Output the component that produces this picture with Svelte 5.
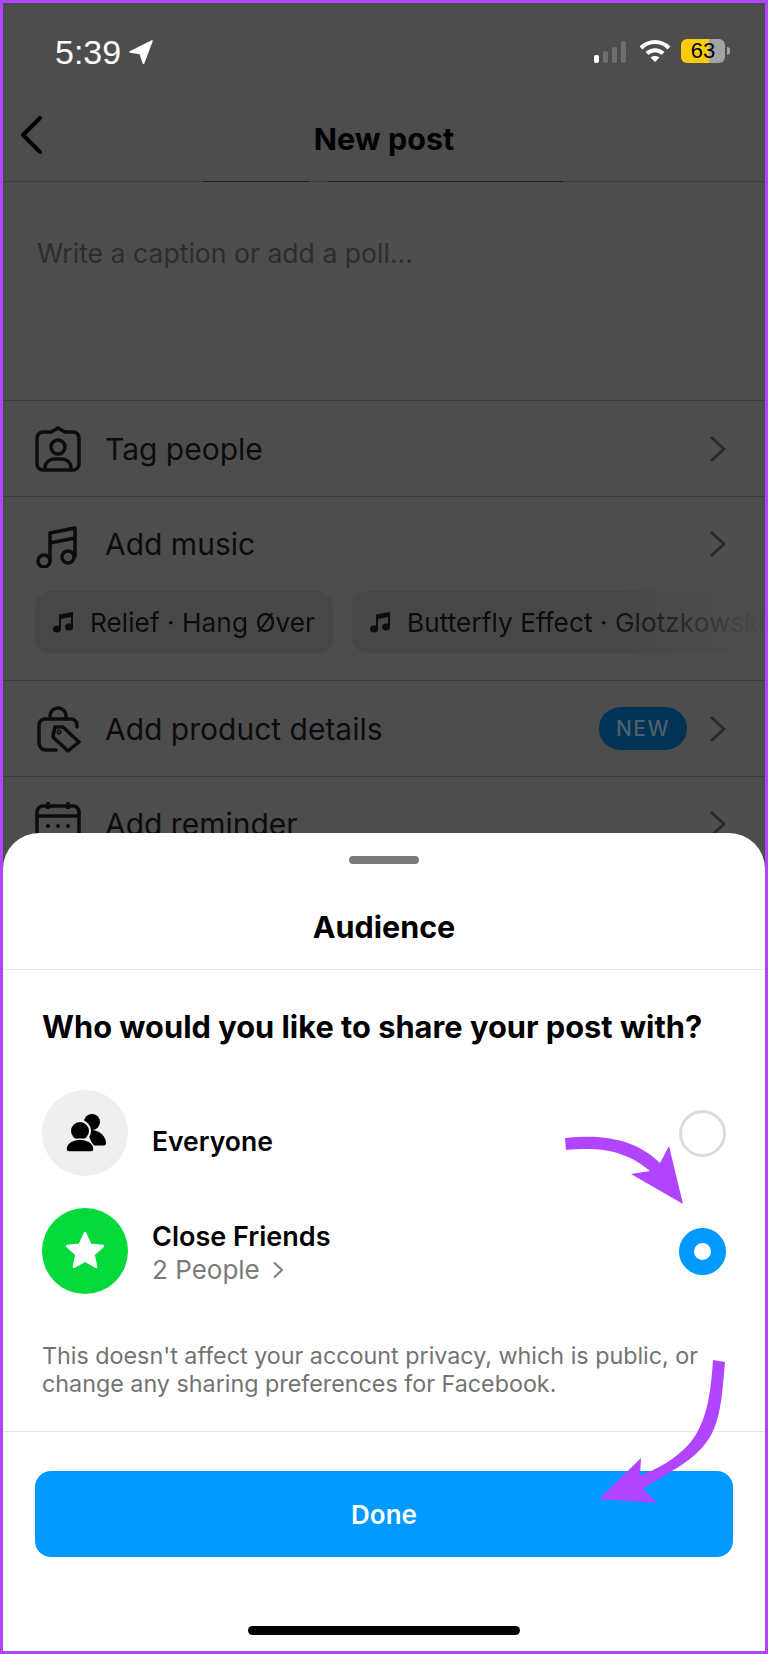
<script>
  // Audience sheet over the dimmed New post screen
  const songs = [
    { title: 'Relief · Hang Øver' },
    { title: 'Butterfly Effect · Glotzkowski' }
  ];
</script>

<div class="phone">
  <div class="status">
    <div class="clock">
      <span>5:39</span>
      <svg width="24" height="24" viewBox="0 0 24 24"><path d="M23 1 L1 12 L11 13.5 L14.5 23.5 Z" fill="#fff" stroke="#fff" stroke-width="1.5" stroke-linejoin="round" /></svg>
    </div>
    <div class="indicators">
      <div class="signal">
        <i class="on" style="height:8px"></i>
        <i style="height:12px"></i>
        <i style="height:16px"></i>
        <i style="height:22px"></i>
      </div>
      <svg width="32" height="24" viewBox="0 0 32 24" fill="none" stroke="#fff" stroke-width="4">
        <path d="M2 9 C10 1 22 1 30 9" />
        <path d="M8 14.5 C12.500 10 19.500 10 24 14.500" />
        <path d="M16 23 L11.500 18.500 C14 16.500 18 16.500 20.500 18.500 Z" fill="#fff" stroke="none" />
      </svg>
      <div class="battery"><span>63</span></div>
    </div>
  </div>

  <header class="nav">
    <svg class="back" width="24" height="38" viewBox="0 0 24 38" fill="none" stroke="#000" stroke-width="4" stroke-linecap="round" stroke-linejoin="round"><path d="M21 2 L4 19 L21 36" /></svg>
    <h1>New post</h1>
    <div class="scrap"><i></i><i></i></div>
  </header>

  <div class="caption">Write a caption or add a poll...</div>

  <div class="row">
    <svg class="ico" width="48" height="48" viewBox="0 0 48 48" fill="none" stroke="#0c0c0c" stroke-width="3.500" stroke-linejoin="round">
      <path d="M17 7 H9 a6 6 0 0 0 -6 6 v26 a6 6 0 0 0 6 6 h30 a6 6 0 0 0 6 -6 v-26 a6 6 0 0 0 -6 -6 h-8 l-7 -4 Z" />
      <circle cx="24" cy="22" r="7" />
      <path d="M11 45 v-2 c0 -6 5 -9 9 -9 h8 c4 0 9 3 9 9 v2" />
    </svg>
    <span class="label">Tag people</span>
    <svg class="chev" width="18" height="28" viewBox="0 0 18 28" fill="none" stroke="#2a2a2a" stroke-width="2.600"><path d="M2 2 L15 14 L2 26" /></svg>
  </div>

  <div class="music">
    <div class="row plain">
      <svg class="ico" width="48" height="48" viewBox="0 0 48 48" fill="none" stroke="#0c0c0c" stroke-width="3.500" stroke-linejoin="round">
        <circle cx="10" cy="41" r="6" />
        <circle cx="34" cy="37" r="6" />
        <path d="M16 41 V13 L41 8 V37 M16 23 L41 18" />
      </svg>
      <span class="label">Add music</span>
      <svg class="chev" width="18" height="28" viewBox="0 0 18 28" fill="none" stroke="#2a2a2a" stroke-width="2.600"><path d="M2 2 L15 14 L2 26" /></svg>
    </div>
    <div class="chips">
      {#each songs as song}
        <div class="chip">
          <svg width="20" height="22" viewBox="0 0 20 22" fill="#0c0c0c">
            <ellipse cx="4" cy="18" rx="4" ry="3.500" />
            <ellipse cx="16" cy="16" rx="4" ry="3.500" />
            <path d="M6 18 H8 V8 L18 6 V16 H20 V1 L6 3.500 Z" />
          </svg>
          <span>{song.title}</span>
        </div>
      {/each}
    </div>
  </div>

  <div class="row">
    <svg class="ico" width="48" height="48" viewBox="0 0 48 48" fill="none" stroke="#0c0c0c" stroke-width="3.500" stroke-linecap="round" stroke-linejoin="round">
      <path d="M16 14 v-3 a8 8 0 0 1 16 0 v3" />
      <path d="M22 45 h-10 a7 7 0 0 1 -7 -7 v-18 a6 6 0 0 1 6 -6 h26 a6 6 0 0 1 6 6 v2" />
      <path d="M21 22 h7 a3 3 0 0 1 2 1 l15 14 l-11 9 l-14 -13 a3 3 0 0 1 -1 -2 Z" />
      <circle cx="25" cy="27" r="0.800" />
    </svg>
    <span class="label">Add product details</span>
    <span class="new">NEW</span>
    <svg class="chev" width="18" height="28" viewBox="0 0 18 28" fill="none" stroke="#2a2a2a" stroke-width="2.600"><path d="M2 2 L15 14 L2 26" /></svg>
  </div>

  <div class="row plain">
    <svg class="ico" width="48" height="48" viewBox="0 0 48 48" fill="none" stroke="#0c0c0c" stroke-width="3.500" stroke-linejoin="round">
      <rect x="3" y="6" width="42" height="40" rx="6" />
      <path d="M3 16 H45 M14 2 V9 M34 2 V9" />
      <path d="M14 26 h.1 M24 26 h.1 M34 26 h.1" stroke-width="4" stroke-linecap="round" />
    </svg>
    <span class="label">Add reminder</span>
    <svg class="chev" width="18" height="28" viewBox="0 0 18 28" fill="none" stroke="#2a2a2a" stroke-width="2.600"><path d="M2 2 L15 14 L2 26" /></svg>
  </div>

  <section class="sheet">
    <div class="sheet-head">
      <div class="grab"></div>
      <h2>Audience</h2>
    </div>

    <div class="sheet-body">
      <h3>Who would you like to share your post with?</h3>

      <div class="option">
        <div class="avatar grey">
          <svg width="44" height="42" viewBox="0 0 44 42" fill="#000">
            <circle cx="29" cy="10" r="8" />
            <path d="M28 18 C37 18 43 25 43 31 C43 33 42 33.500 40 33.500 H30 L24 20 Z" />
            <circle cx="17" cy="19" r="10" stroke="#efefef" stroke-width="2" />
            <path d="M3 37 C3 31 10 27 17 27 C24 27 31 31 31 37 C31 39 30 40 28 40 H6 C4 40 3 39 3 37 Z" stroke="#efefef" stroke-width="1.500" />
          </svg>
        </div>
        <div class="who single"><strong>Everyone</strong></div>
        <div class="radio"></div>
      </div>

      <div class="option">
        <div class="avatar green">
          <svg width="42" height="42" viewBox="0 0 42 42" fill="#fff" stroke="#fff" stroke-width="2.500" stroke-linejoin="round">
            <path d="M21 3 L26.300 14.700 L39 16 L29.500 24.500 L32.200 37 L21 30.600 L9.800 37 L12.500 24.500 L3 16 L15.700 14.700 Z" />
          </svg>
        </div>
        <div class="who pair">
          <strong>Close Friends</strong>
          <small>2 People
            <svg width="12" height="18" viewBox="0 0 12 18" fill="none" stroke="#7a7a7a" stroke-width="2"><path d="M2 1.500 L10 9 L2 16.500" /></svg>
          </small>
        </div>
        <div class="radio active"></div>
      </div>

      <p class="note">This doesn't affect your account privacy, which is public, or change any sharing preferences for Facebook.</p>
    </div>

    <div class="sheet-foot">
      <button class="done">Done</button>
      <div class="home"></div>
    </div>
  </section>

  <!-- annotation arrows drawn over the screenshot -->
  <svg class="arrows" width="768" height="1654" viewBox="0 0 768 1654" fill="#b044ff">
    <path d="M565 1138 C600 1134 635 1138 660 1163 L669 1146 L683 1204 L631 1174 L650 1171 C625 1150 600 1147 566 1150 Z" />
    <path d="M713 1360 L725 1362 C722 1395 721 1425 705 1444 C692 1462 665 1474 643 1489 L657 1503 L599 1499 L641 1458 L640 1476 C665 1466 685 1452 695 1436 C708 1415 711 1390 713 1360 Z" />
  </svg>
</div>

<style>
  :global(body) { margin: 0; background: #4d4d4d; }

  .phone {
    position: relative;
    width: 768px;
    height: 1654px;
    box-sizing: border-box;
    border: 3px solid #b044ff;
    background: #4d4d4d;
    overflow: hidden;
    font-family: Inter, "Noto Sans", sans-serif;
    color: #0c0c0c;
  }

  /* status bar */
  .status {
    height: 93px;
    box-sizing: border-box;
    padding: 31px 36px 0 52px;
    display: flex;
    justify-content: space-between;
    align-items: flex-start;
  }
  .clock {
    display: flex;
    align-items: center;
    gap: 8px;
    font-family: "Liberation Sans", sans-serif;
    font-size: 34px;
    line-height: 36px;
    color: #fff;
  }
  .indicators { display: flex; align-items: center; gap: 10px; margin-top: 5px; }
  .signal { display: flex; align-items: flex-end; gap: 4px; height: 24px; margin-right: 3px; }
  .signal i { width: 5px; border-radius: 2px; background: #6f6f6f; }
  .signal i.on { background: #fff; }
  .battery {
    position: relative;
    width: 44px;
    height: 24px;
    border-radius: 6px;
    background: linear-gradient(90deg, #fccc0a 64%, #a3a3a3 64%);
    color: #000;
    font-family: "Liberation Sans", sans-serif;
    font-size: 22px;
    line-height: 24px;
    text-align: center;
    margin-right: 4px;
  }
  .battery::after {
    content: "";
    position: absolute;
    right: -5px;
    top: 8px;
    width: 3px;
    height: 8px;
    border-radius: 0 3px 3px 0;
    background: #a3a3a3;
  }

  /* nav */
  .nav {
    position: relative;
    height: 85px;
    box-sizing: content-box;
    border-bottom: 1px solid #3d3d3d;
    display: flex;
    align-items: center;
    justify-content: center;
  }
  .nav h1 { margin: 0; font-size: 30.500px; font-weight: 700; color: #000; }
  .back { position: absolute; left: 16px; top: 20px; }
  .scrap { position: absolute; left: 200px; bottom: -1px; display: flex; gap: 19px; }
  .scrap i { display: block; height: 1px; background: #1c1c1c; width: 106px; }
  .scrap i + i { width: 235px; }

  .caption {
    height: 219px;
    box-sizing: border-box;
    padding: 53px 32px 0 34px;
    border-bottom: 1px solid #3d3d3d;
    font-size: 26.600px;
    line-height: 36px;
    color: #2d2d2d;
  }

  /* settings rows */
  .row {
    height: 96px;
    box-sizing: border-box;
    padding: 0 38px 0 31px;
    border-bottom: 1px solid #3d3d3d;
    display: flex;
    align-items: center;
  }
  .row.plain { border-bottom: 0; height: 93px; }
  .ico { flex: none; }
  .label { flex: 1; margin-left: 23px; font-size: 30px; }
  .chev { flex: none; margin-left: 16px; }
  .new {
    width: 88px;
    height: 43px;
    box-sizing: border-box;
    border-radius: 22px;
    background: #003355;
    color: #4f5f6b;
    font-size: 21px;
    font-weight: 500;
    letter-spacing: 1.500px;
    line-height: 43px;
    text-align: center;
  }
  .new + .chev { margin-left: 22px; }

  .music { height: 184px; box-sizing: border-box; border-bottom: 1px solid #3d3d3d; }
  .chips {
    display: flex;
    gap: 19px;
    padding-left: 32px;
    margin-top: 1px;
    overflow: hidden;
    -webkit-mask-image: linear-gradient(90deg, #000 600px, transparent 762px);
    mask-image: linear-gradient(90deg, #000 600px, transparent 762px);
  }
  .chip {
    flex: none;
    height: 62px;
    padding: 0 18px;
    box-sizing: border-box;
    border-radius: 16px;
    background: #474747;
    display: flex;
    align-items: center;
    gap: 17px;
    font-size: 26.300px;
    white-space: nowrap;
  }

  /* bottom sheet */
  .sheet {
    position: absolute;
    left: 0;
    right: 0;
    top: 830px;
    bottom: 0;
    background: #fff;
    border-radius: 36px 36px 0 0;
    color: #000;
    display: flex;
    flex-direction: column;
  }
  .sheet-head {
    height: 137px;
    box-sizing: border-box;
    border-bottom: 1px solid #e6e6e6;
    display: flex;
    flex-direction: column;
    align-items: center;
  }
  .grab { width: 70px; height: 8px; margin-top: 23px; border-radius: 4px; background: #7a7a7a; }
  .sheet-head h2 { margin: 44px 0 0; font-size: 30.500px; line-height: 38px; font-weight: 700; }

  .sheet-body { height: 462px; box-sizing: border-box; padding: 37px 39px 0 39px; border-bottom: 1px solid #e6e6e6; }
  .sheet-body h3 { margin: 0 0 43px; font-size: 30.800px; line-height: 40px; font-weight: 700; white-space: nowrap; }

  .option { display: flex; align-items: center; height: 86px; margin-bottom: 32px; }
  .avatar {
    flex: none;
    width: 86px;
    height: 86px;
    border-radius: 50%;
    display: flex;
    align-items: center;
    justify-content: center;
  }
  .avatar.grey { background: #efefef; }
  .avatar.green { background: #03d93b; }
  .who { flex: 1; margin-left: 24px; display: flex; flex-direction: column; }
  .who.single { padding-top: 16px; }
  .who.pair { padding-top: 4px; }
  .who strong { font-size: 27px; line-height: 34px; font-weight: 600; }
  .who.single strong { font-size: 26.500px; }
  .who small { font-size: 26px; line-height: 32px; color: #7a7a7a; display: flex; align-items: center; gap: 12px; }
  .radio { flex: none; width: 47px; height: 47px; box-sizing: border-box; border: 3px solid #dbdbdb; border-radius: 50%; }
  .radio.active { border: 15px solid #0099ff; }

  .note { margin: 48px 0 0; font-size: 23.300px; line-height: 28px; color: #737373; }

  .sheet-foot { flex: 1; padding: 39px 32px 0; display: flex; flex-direction: column; align-items: center; }
  .done {
    width: 100%;
    height: 86px;
    border: 0;
    border-radius: 16px;
    background: #0099ff;
    color: #fff;
    font-family: inherit;
    font-size: 26px;
    font-weight: 600;
  }
  .home { width: 272px; height: 9px; margin-top: 69px; border-radius: 5px; background: #000; }

  .arrows { position: absolute; left: -3px; top: -3px; pointer-events: none; }
</style>
